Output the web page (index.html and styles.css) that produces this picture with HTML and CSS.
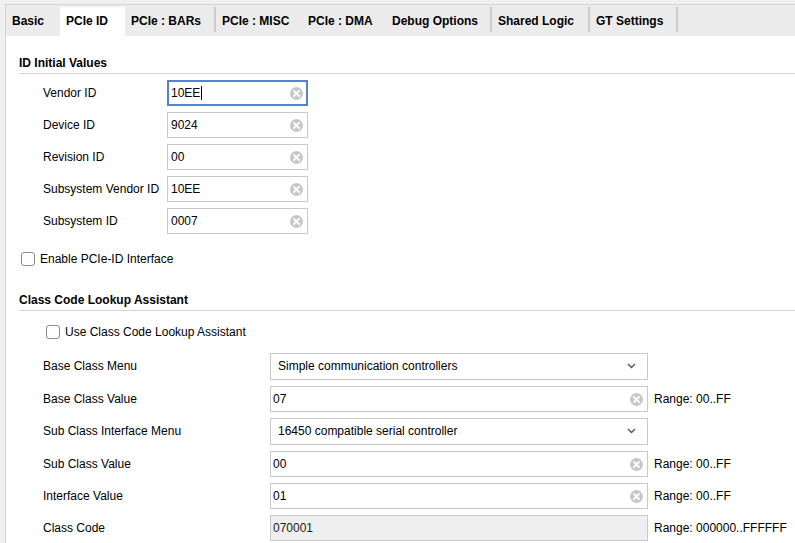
FILE: index.html
```html
<!DOCTYPE html>
<html>
<head>
<meta charset="utf-8">
<link rel="stylesheet" href="styles.css">
</head>
<body>
<div class="window">
  <div class="tabbar">
    <div class="tab">Basic</div>
    <div class="tab active">PCIe ID</div>
    <div class="tab">PCIe : BARs</div>
    <div class="tab-sep"></div>
    <div class="tab">PCIe : MISC</div>
    <div class="tab">PCIe : DMA</div>
    <div class="tab">Debug Options</div>
    <div class="tab-sep"></div>
    <div class="tab">Shared Logic</div>
    <div class="tab-sep"></div>
    <div class="tab">GT Settings</div>
    <div class="tab-sep"></div>
  </div>
  <div class="panel">
    <div class="section-title">ID Initial Values</div>
    <div class="id-grid">
      <div class="label">Vendor ID</div>
      <div class="field focused"><span class="value">10EE<span class="caret"></span></span><svg class="clear" viewBox="0 0 12 12" width="13" height="13"><circle cx="6" cy="6" r="6" fill="#c8c8c8"/><path d="M3.7 3.7 L8.3 8.3 M8.3 3.7 L3.7 8.3" stroke="#fff" stroke-width="1.7" stroke-linecap="round"/></svg></div>
      <div class="label">Device ID</div>
      <div class="field"><span class="value">9024</span><svg class="clear" viewBox="0 0 12 12" width="13" height="13"><circle cx="6" cy="6" r="6" fill="#c8c8c8"/><path d="M3.7 3.7 L8.3 8.3 M8.3 3.7 L3.7 8.3" stroke="#fff" stroke-width="1.7" stroke-linecap="round"/></svg></div>
      <div class="label">Revision ID</div>
      <div class="field"><span class="value">00</span><svg class="clear" viewBox="0 0 12 12" width="13" height="13"><circle cx="6" cy="6" r="6" fill="#c8c8c8"/><path d="M3.7 3.7 L8.3 8.3 M8.3 3.7 L3.7 8.3" stroke="#fff" stroke-width="1.7" stroke-linecap="round"/></svg></div>
      <div class="label">Subsystem Vendor ID</div>
      <div class="field"><span class="value">10EE</span><svg class="clear" viewBox="0 0 12 12" width="13" height="13"><circle cx="6" cy="6" r="6" fill="#c8c8c8"/><path d="M3.7 3.7 L8.3 8.3 M8.3 3.7 L3.7 8.3" stroke="#fff" stroke-width="1.7" stroke-linecap="round"/></svg></div>
      <div class="label">Subsystem ID</div>
      <div class="field"><span class="value">0007</span><svg class="clear" viewBox="0 0 12 12" width="13" height="13"><circle cx="6" cy="6" r="6" fill="#c8c8c8"/><path d="M3.7 3.7 L8.3 8.3 M8.3 3.7 L3.7 8.3" stroke="#fff" stroke-width="1.7" stroke-linecap="round"/></svg></div>
    </div>
    <div class="check"><span class="box"></span><span>Enable PCIe-ID Interface</span></div>

    <div class="section-title second">Class Code Lookup Assistant</div>
    <div class="check indent"><span class="box"></span><span>Use Class Code Lookup Assistant</span></div>
    <div class="cc-grid">
      <div class="label">Base Class Menu</div>
      <div class="select"><span>Simple communication controllers</span><svg class="chev" viewBox="0 0 9 6" width="9" height="6"><path d="M1 1 L4.5 4.5 L8 1" fill="none" stroke="#555" stroke-width="1.4"/></svg></div>
      <div class="range"></div>

      <div class="label">Base Class Value</div>
      <div class="field wide"><span class="value">07</span><svg class="clear" viewBox="0 0 12 12" width="13" height="13"><circle cx="6" cy="6" r="6" fill="#c8c8c8"/><path d="M3.7 3.7 L8.3 8.3 M8.3 3.7 L3.7 8.3" stroke="#fff" stroke-width="1.7" stroke-linecap="round"/></svg></div>
      <div class="range">Range: 00..FF</div>

      <div class="label">Sub Class Interface Menu</div>
      <div class="select"><span>16450 compatible serial controller</span><svg class="chev" viewBox="0 0 9 6" width="9" height="6"><path d="M1 1 L4.5 4.5 L8 1" fill="none" stroke="#555" stroke-width="1.4"/></svg></div>
      <div class="range"></div>

      <div class="label">Sub Class Value</div>
      <div class="field wide"><span class="value">00</span><svg class="clear" viewBox="0 0 12 12" width="13" height="13"><circle cx="6" cy="6" r="6" fill="#c8c8c8"/><path d="M3.7 3.7 L8.3 8.3 M8.3 3.7 L3.7 8.3" stroke="#fff" stroke-width="1.7" stroke-linecap="round"/></svg></div>
      <div class="range">Range: 00..FF</div>

      <div class="label">Interface Value</div>
      <div class="field wide"><span class="value">01</span><svg class="clear" viewBox="0 0 12 12" width="13" height="13"><circle cx="6" cy="6" r="6" fill="#c8c8c8"/><path d="M3.7 3.7 L8.3 8.3 M8.3 3.7 L3.7 8.3" stroke="#fff" stroke-width="1.7" stroke-linecap="round"/></svg></div>
      <div class="range">Range: 00..FF</div>

      <div class="label">Class Code</div>
      <div class="field wide disabled"><span class="value">070001</span></div>
      <div class="range">Range: 000000..FFFFFF</div>
    </div>
  </div>
</div>
</body>
</html>
```

FILE: styles.css
```css
html, body {
  margin: 0;
  padding: 0;
}
body {
  background: #f0f0f0;
  font-family: "Liberation Sans", Arial, sans-serif;
  font-size: 12px;
  color: #000;
  overflow: hidden;
}
.window {
  margin: 4px 0 0 5px;
  border-top: 1px solid #d4d4d4;
  border-left: 1px solid #d4d4d4;
}
.tabbar {
  display: grid;
  grid-template-columns: 54px 65px 89px 2px 86px 84px 104px 2px 96px 2px 86px 2px 1fr;
  height: 31px;
  background: #ececec;
}
.tab {
  align-self: end;
  height: 29px;
  box-sizing: border-box;
  padding: 0 0 2px 6px;
  display: flex;
  align-items: center;
  font-weight: bold;
  line-height: 14px;
  white-space: nowrap;
}
.tab.active {
  background: #fff;
}
.tab-sep {
  align-self: start;
  margin-top: 2px;
  height: 25px;
  background: #cbcbcb;
}
.panel {
  background: #fff;
  padding: 20px 0 40px 13px;
}
.section-title {
  font-weight: bold;
  line-height: 14px;
  padding-bottom: 3px;
  border-bottom: 1px solid #d6d6d6;
}
.section-title.second {
  margin-top: 27px;
}
.id-grid {
  display: grid;
  grid-template-columns: 124px 141px;
  row-gap: 6px;
  margin: 6px 0 0 24px;
  align-items: center;
}
.label {
  line-height: 14px;
  padding-bottom: 1px;
  white-space: nowrap;
}
.field {
  display: flex;
  align-items: center;
  height: 26px;
  box-sizing: border-box;
  border: 1px solid #c9c9c9;
  background: #fff;
  padding: 0 4px 0 3px;
  line-height: 14px;
}
.field.focused {
  border: 2px solid #5682cf;
  padding: 0 3px 0 2px;
}
.field.wide {
  padding-left: 2px;
}
.field.disabled {
  background: #efefef;
  color: #222;
}
.value {
  flex: 1;
  white-space: nowrap;
}
.caret {
  display: inline-block;
  width: 1px;
  height: 14px;
  background: #000;
  vertical-align: -3px;
  margin-left: 1px;
}
.clear {
  display: block;
  flex: none;
}
.check {
  display: flex;
  align-items: center;
  gap: 5px;
  height: 14px;
  margin: 18px 0 0 2px;
  line-height: 14px;
}
.check.indent {
  margin: 14px 0 0 27px;
}
.box {
  width: 14px;
  height: 14px;
  box-sizing: border-box;
  border: 1px solid #8c8c8c;
  border-radius: 3px;
  background: #fff;
  flex: none;
}
.cc-grid {
  display: grid;
  grid-template-columns: 227px 378px auto;
  row-gap: 6px;
  margin: 14px 0 0 24px;
  align-items: center;
}
.select {
  display: flex;
  align-items: center;
  justify-content: space-between;
  height: 27px;
  box-sizing: border-box;
  border: 1px solid #c9c9c9;
  background: #fff;
  padding: 0 11px 1px 7px;
  line-height: 14px;
  white-space: nowrap;
}
.chev {
  display: block;
  flex: none;
}
.range {
  margin-left: 6px;
  line-height: 14px;
  white-space: nowrap;
}
```
